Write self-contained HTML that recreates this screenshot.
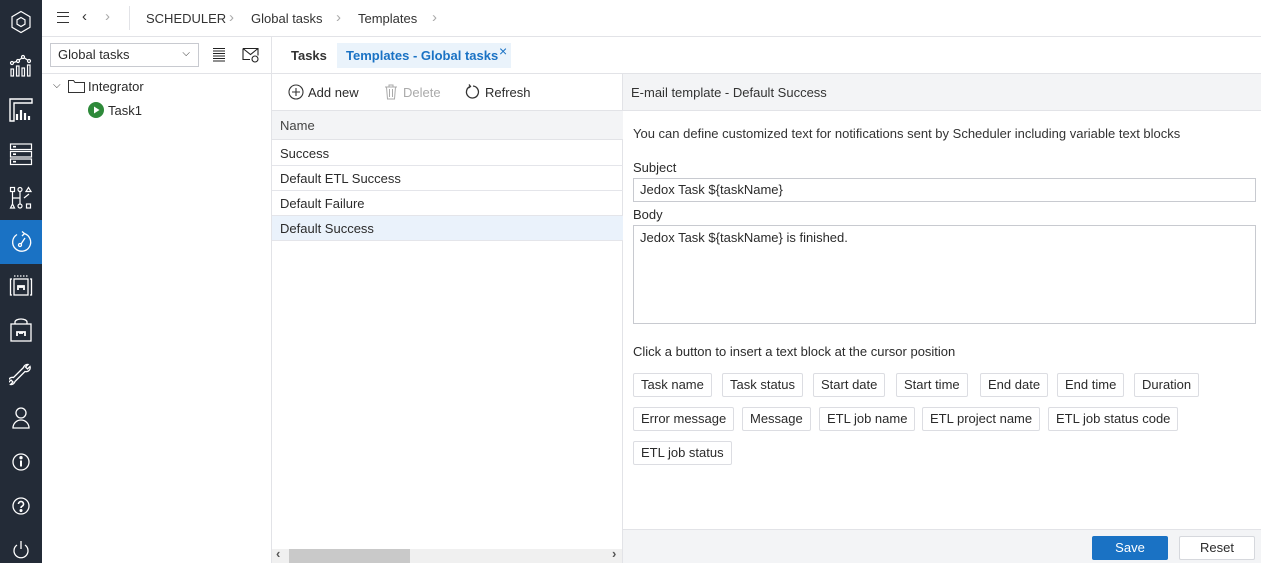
<!DOCTYPE html><html><head><style>
*{box-sizing:border-box;margin:0;padding:0}
body{width:1261px;height:563px;overflow:hidden;font-family:"Liberation Sans",sans-serif;font-size:13px;color:#2b2b2b;background:#fff;position:relative}
.a{position:absolute}
.sb{left:0;top:0;width:42px;height:563px;background:#232b37}
.ic{position:absolute;left:0;width:42px;height:44px}
.ic svg{position:absolute;left:9px;top:10px}
.btn{position:absolute;height:24px;border:1px solid #dcdde2;border-radius:2px;background:#fff;font-size:13px;line-height:22px;padding:0 7px;color:#2b2b2b}
.row{position:absolute;left:272px;width:351px;height:25px;line-height:25px;padding-left:8px;border-bottom:1px solid #e4e5ea}
</style></head><body>
<div class="a sb">
<div class="ic" style="top:0"><svg width="24" height="24" viewBox="0 0 24 24" fill="none" stroke="#fff" stroke-width="1.2"><path d="M12 1.5 21 6.7v10.6L12 22.5 3 17.3V6.7z"/><path d="M12 7.5 16 9.8v4.4L12 16.5 8 14.2V9.8z"/></svg></div>
<div class="ic" style="top:44px"><svg width="24" height="24" viewBox="0 0 24 24" fill="none" stroke="#fff" stroke-width="1.2"><circle cx="3" cy="9" r="1.5"/><circle cx="9" cy="7" r="1.5"/><circle cx="14" cy="3" r="1.5"/><circle cx="20" cy="7" r="1.5"/><path d="M4.5 8.5 7.5 7.5M10 6l3-2M15.5 4l3 2"/><rect x="2" y="15" width="2.5" height="7"/><rect x="7.5" y="12" width="2.5" height="10"/><rect x="13" y="14" width="2.5" height="8"/><rect x="18.5" y="11" width="2.5" height="11"/></svg></div>
<div class="ic" style="top:88px"><svg width="24" height="24" viewBox="0 0 24 24" fill="none" stroke="#fff" stroke-width="1.4"><path d="M1 23V1h22v4H5v18z"/><path d="M8 22v-6M12 22v-10M16 22v-7M20 22v-4" stroke-width="2.2"/></svg></div>
<div class="ic" style="top:132px"><svg width="24" height="24" viewBox="0 0 24 24" fill="none" stroke="#fff" stroke-width="1.2"><rect x="1.5" y="2" width="21" height="5.5"/><rect x="1.5" y="9.5" width="21" height="5.5"/><rect x="1.5" y="17" width="21" height="5.5"/><path d="M4 4.7h3M4 12.2h3M4 19.7h3" stroke-width="1.6"/></svg></div>
<div class="ic" style="top:176px"><svg width="24" height="24" viewBox="0 0 24 24" fill="none" stroke="#fff" stroke-width="1.2"><rect x="1.5" y="1.5" width="4" height="4"/><circle cx="11" cy="3.5" r="2"/><path d="M17 5.5l2.5-4 2.5 4z"/><path d="M3.5 6v12M11 6v12M3.5 12h7.5M20 8l-5 4"/><path d="M1.5 22l2-4 2 4z"/><circle cx="11" cy="20" r="2"/><rect x="17.5" y="18" width="4" height="4"/></svg></div>
<div class="ic" style="top:220px;background:#1a72c4"><svg width="24" height="24" viewBox="0 0 24 24" fill="none" stroke="#fff" stroke-width="1.3"><path d="M8 4.5A9 9 0 1 0 15 3.5"/><path d="M13 1.5l2.5 2-2.5 2.5"/><circle cx="11" cy="15" r="1.5"/><path d="M12 14l4-6"/></svg></div>
<div class="ic" style="top:264px"><svg width="24" height="24" viewBox="0 0 24 24" fill="none" stroke="#fff" stroke-width="1.3"><path d="M3 5H1.5v16H3M21 5h1.5v16H21"/><rect x="5" y="5" width="14" height="16"/><path d="M5 2h14" stroke-dasharray="1.5 1.5"/><path d="M9 16v-4h6v4M11 12v2M13 12v2" stroke-width="1.8"/></svg></div>
<div class="ic" style="top:308px"><svg width="24" height="24" viewBox="0 0 24 24" fill="none" stroke="#fff" stroke-width="1.3"><rect x="2" y="6" width="20" height="17"/><path d="M6 6V4a6 3 0 0 1 12 0v2"/><path d="M8 18v-4h8v4M11 14v2M13 14v2" stroke-width="1.8"/></svg></div>
<div class="ic" style="top:352px"><svg width="24" height="24" viewBox="0 0 24 24" fill="none" stroke="#fff" stroke-width="1.3"><path d="M19 2.5l-2.5 2.5 2 2 2.5-2.5a4 4 0 0 1-5 5L6 19.5a4 4 0 0 1-4.5 3 L4 20l-2-2-2.5 2.5a4 4 0 0 1 5-5L14.5 5.5a4 4 0 0 1 4.5-3z"/></svg></div>
<div class="ic" style="top:396px"><svg width="24" height="24" viewBox="0 0 24 24" fill="none" stroke="#fff" stroke-width="1.3"><circle cx="12" cy="7" r="5"/><path d="M4 22a8 8 0 0 1 16 0z"/></svg></div>
<div class="ic" style="top:440px"><svg width="24" height="24" viewBox="0 0 24 24" fill="none" stroke="#fff" stroke-width="1.3"><circle cx="12" cy="12" r="8"/><path d="M12 10.5v6" stroke-width="2"/><circle cx="12" cy="7.7" r="1" fill="#fff"/></svg></div>
<div class="ic" style="top:484px"><svg width="24" height="24" viewBox="0 0 24 24" fill="none" stroke="#fff" stroke-width="1.3"><circle cx="12" cy="12" r="8"/><path d="M9.5 10a2.5 2.5 0 1 1 3.5 2.3c-.8.4-1 1-1 1.7" stroke-width="1.6"/><circle cx="12" cy="16.5" r=".9" fill="#fff"/></svg></div>
<div class="ic" style="top:528px"><svg width="24" height="24" viewBox="0 0 24 24" fill="none" stroke="#fff" stroke-width="1.3"><path d="M8 7a7 7 0 1 0 8 0"/><path d="M12 3v8"/></svg></div>
</div>
<div class="a" style="left:42px;top:36px;width:1219px;height:1px;background:#e2e3e7"></div>
<div class="a" style="left:57px;top:12px;width:12px;height:11px;border-top:1.5px solid #333;border-bottom:1.5px solid #333"><div style="margin-top:3px;border-top:1.5px solid #333"></div></div>
<div class="a" style="left:82px;top:8px;font-size:15px;color:#333">‹</div>
<div class="a" style="left:105px;top:8px;font-size:15px;color:#aaa">›</div>
<div class="a" style="left:129px;top:6px;width:1px;height:24px;background:#e2e3e7"></div>
<div class="a" style="left:146px;top:11px;color:#333">SCHEDULER</div>
<div class="a" style="left:229px;top:9px;color:#aaa;font-size:15px">›</div>
<div class="a" style="left:251px;top:11px;color:#333">Global tasks</div>
<div class="a" style="left:336px;top:9px;color:#aaa;font-size:15px">›</div>
<div class="a" style="left:358px;top:11px;color:#333">Templates</div>
<div class="a" style="left:432px;top:9px;color:#aaa;font-size:15px">›</div>
<div class="a" style="left:271px;top:37px;width:1px;height:526px;background:#e2e3e7"></div>
<div class="a" style="left:42px;top:73px;width:229px;height:1px;background:#e2e3e7"></div>
<div class="a" style="left:50px;top:43px;width:149px;height:24px;border:1px solid #c8cad0;padding-left:7px;line-height:22px">Global tasks<span style="position:absolute;right:8px;top:-1px;font-size:10px">⌵</span></div>
<svg class="a" style="left:211px;top:47px" width="16" height="16"><path d="M2 1.5h12M2 4h12M2 6.5h12M2 9h12M2 11.5h12M2 14h12" stroke="#222" stroke-width="1"/></svg>
<svg class="a" style="left:242px;top:47px" width="18" height="16" fill="none" stroke="#222" stroke-width="1.1"><path d="M1 1.5h15v7M1 1.5v11h7M1 1.5l7.5 6 7.5-6"/><circle cx="13" cy="12" r="3"/></svg>
<div class="a" style="left:53px;top:80px;font-size:10px;color:#333">⌵</div>
<svg class="a" style="left:68px;top:79px" width="17" height="14" fill="none" stroke="#333" stroke-width="1"><path d="M.5 1.5h5l1.5 2h9.5v10H.5z"/></svg>
<div class="a" style="left:88px;top:79px">Integrator</div>
<svg class="a" style="left:88px;top:102px" width="16" height="16"><circle cx="8" cy="8" r="8" fill="#2e8a3a"/><path d="M6 4.5v7l5.5-3.5z" fill="#fff"/></svg>
<div class="a" style="left:108px;top:103px">Task1</div>
<div class="a" style="left:272px;top:73px;width:989px;height:1px;background:#e2e3e7"></div>
<div class="a" style="left:291px;top:48px;font-weight:bold;color:#333">Tasks</div>
<div class="a" style="left:337px;top:43px;width:174px;height:25px;background:#eaf3fb;color:#1a72c4;padding-left:9px;line-height:25px;font-weight:bold">Templates - Global tasks<span style="position:absolute;left:162px;top:-4px;font-weight:normal;font-size:14px">×</span></div>
<div class="a" style="left:622px;top:74px;width:1px;height:489px;background:#e2e3e7"></div>
<svg class="a" style="left:288px;top:84px" width="16" height="16" fill="none" stroke="#333" stroke-width="1.1"><circle cx="8" cy="8" r="7"/><path d="M8 4v8M4 8h8"/></svg>
<div class="a" style="left:308px;top:85px">Add new</div>
<svg class="a" style="left:384px;top:84px" width="14" height="16" fill="none" stroke="#aaa" stroke-width="1"><path d="M1 3h12M5 3V1h4v2M2.5 3l1 12h7l1-12M5.5 5v8M8.5 5v8"/></svg>
<div class="a" style="left:403px;top:85px;color:#aaa">Delete</div>
<svg class="a" style="left:465px;top:84px" width="16" height="16" fill="none" stroke="#333" stroke-width="1.3"><path d="M5 2.5A6 6 0 1 0 8 2"/><path d="M4 .5l1.5 2-2 1.5"/></svg>
<div class="a" style="left:485px;top:85px">Refresh</div>
<div class="a" style="left:272px;top:110px;width:351px;height:30px;background:#f3f4f6;border-top:1px solid #e2e3e7;border-bottom:1px solid #e2e3e7;padding-left:8px;line-height:29px;color:#444">Name</div>
<div class="row" style="top:141px">Success</div>
<div class="row" style="top:166px">Default ETL Success</div>
<div class="row" style="top:191px">Default Failure</div>
<div class="row" style="top:216px;background:#eaf2fb">Default Success</div>
<div class="a" style="left:272px;top:549px;width:350px;height:14px;background:#f0f0f0"></div>
<div class="a" style="left:289px;top:549px;width:121px;height:14px;background:#c9c9c9"></div>
<div class="a" style="left:276px;top:546px;font-size:13px;color:#555;font-weight:bold">‹</div>
<div class="a" style="left:612px;top:546px;font-size:13px;color:#555;font-weight:bold">›</div>
<div class="a" style="left:623px;top:74px;width:638px;height:37px;background:#f3f4f6;border-bottom:1px solid #e2e3e7;padding-left:8px;line-height:37px;color:#333">E-mail template - Default Success</div>
<div class="a" style="left:633px;top:126px;color:#333">You can define customized text for notifications sent by Scheduler including variable text blocks</div>
<div class="a" style="left:633px;top:160px">Subject</div>
<div class="a" style="left:633px;top:178px;width:623px;height:24px;border:1px solid #c8cad0;padding-left:6px;line-height:22px">Jedox Task ${taskName}</div>
<div class="a" style="left:633px;top:207px">Body</div>
<div class="a" style="left:633px;top:225px;width:623px;height:99px;border:1px solid #c8cad0;padding:4px 6px">Jedox Task ${taskName} is finished.</div>
<div class="a" style="left:633px;top:344px">Click a button to insert a text block at the cursor position</div>
<div class="btn" style="left:633px;top:373px">Task name</div>
<div class="btn" style="left:722px;top:373px">Task status</div>
<div class="btn" style="left:813px;top:373px">Start date</div>
<div class="btn" style="left:896px;top:373px">Start time</div>
<div class="btn" style="left:980px;top:373px">End date</div>
<div class="btn" style="left:1057px;top:373px">End time</div>
<div class="btn" style="left:1134px;top:373px">Duration</div>
<div class="btn" style="left:633px;top:407px">Error message</div>
<div class="btn" style="left:742px;top:407px">Message</div>
<div class="btn" style="left:819px;top:407px">ETL job name</div>
<div class="btn" style="left:922px;top:407px">ETL project name</div>
<div class="btn" style="left:1048px;top:407px">ETL job status code</div>
<div class="btn" style="left:633px;top:441px">ETL job status</div>
<div class="a" style="left:623px;top:529px;width:638px;height:34px;background:#f3f4f6;border-top:1px solid #e2e3e7"></div>
<div class="a" style="left:1092px;top:536px;width:76px;height:24px;background:#1a72c4;color:#fff;text-align:center;line-height:24px;border-radius:2px">Save</div>
<div class="a" style="left:1179px;top:536px;width:76px;height:24px;background:#fff;border:1px solid #d6d8dd;text-align:center;line-height:22px;border-radius:2px">Reset</div>
</body></html>
